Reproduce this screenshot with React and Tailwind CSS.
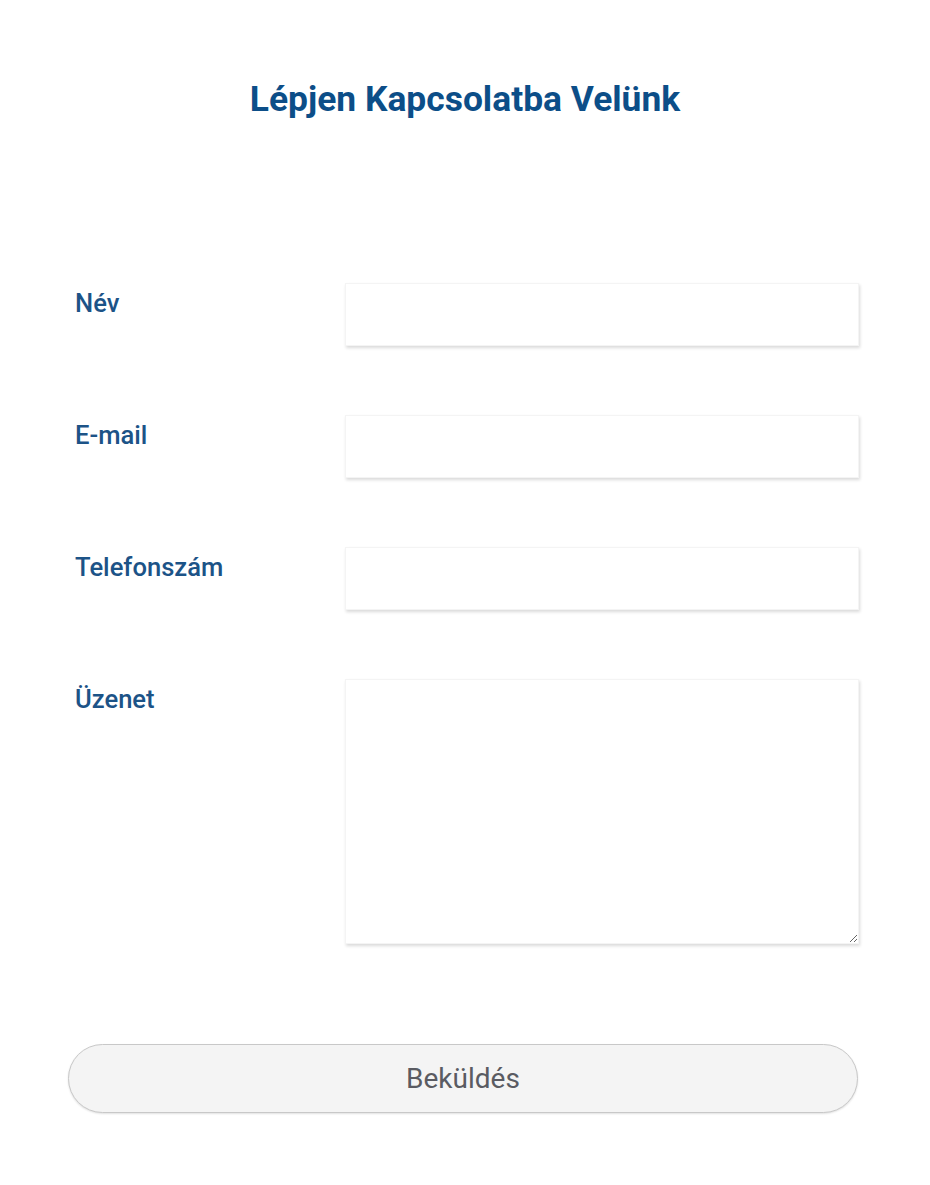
import React from "react";

function Field({ label, tall }) {
  return (
    <div className="grid grid-cols-[277px_514px] items-start">
      <label className="pl-[7px] pt-[6px] text-[25.6px] font-medium leading-[28px] text-[#1c5387]">
        {label}
      </label>
      {tall ? (
        <textarea className="h-[265px] w-[514px] resize-y border border-[#f4f4f4] bg-white shadow-[1px_2px_3px_rgba(0,0,0,0.15)] outline-none" />
      ) : (
        <input
          type="text"
          className="h-[63px] w-[514px] border border-[#f4f4f4] bg-white shadow-[1px_2px_3px_rgba(0,0,0,0.15)] outline-none"
        />
      )}
    </div>
  );
}

export default function App() {
  return (
    <div
      className="min-h-[1185px] w-[930px] bg-white"
      style={{ fontFamily: "Roboto, 'Liberation Sans', sans-serif" }}
    >
      <div className="px-[68px] pt-[78px]">
        <h1 className="text-center text-[35.4px] font-bold leading-[42px] text-[#0c4e88]">
          Lépjen Kapcsolatba Velünk
        </h1>
        <div className="mt-[163px] flex flex-col gap-[69px]">
          <Field label="Név" />
          <Field label="E-mail" />
          <Field label="Telefonszám" />
          <Field label="Üzenet" tall />
        </div>
        <button className="mt-[100px] h-[69px] w-[790px] rounded-full border border-[#c8c8c8] bg-[#f4f4f4] text-[28px] text-[#5a5b62] shadow-[0_1px_2px_rgba(0,0,0,0.12)]">
          Beküldés
        </button>
      </div>
    </div>
  );
}
